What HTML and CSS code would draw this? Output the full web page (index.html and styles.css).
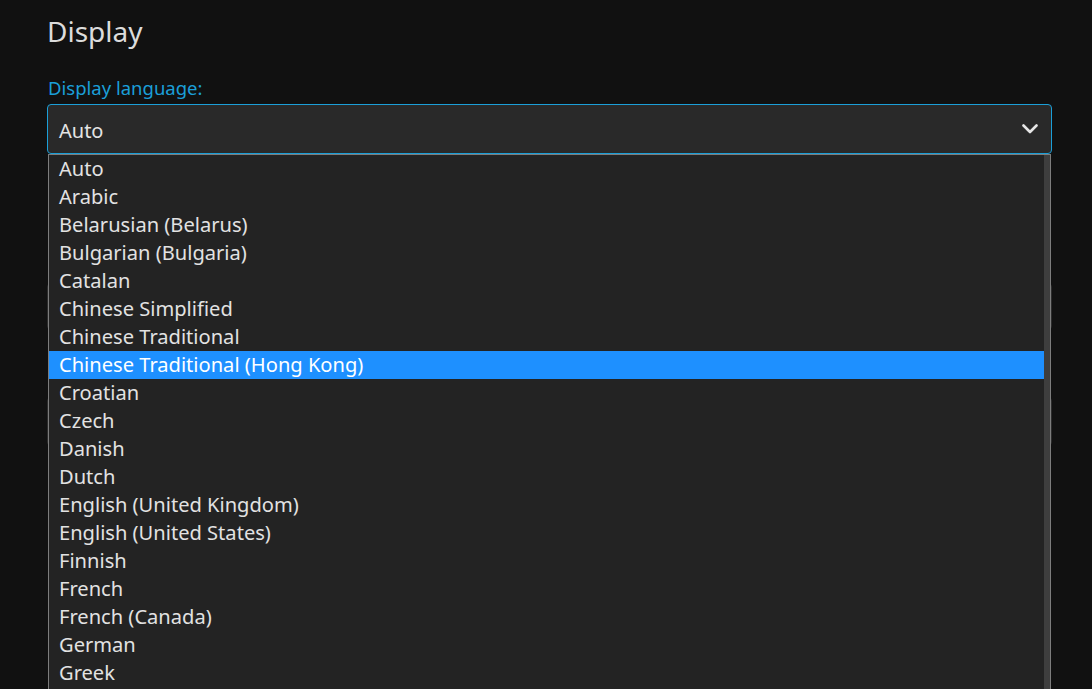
FILE: index.html
```html
<!DOCTYPE html>
<html lang="en">
<head>
<meta charset="utf-8">
<title>Display</title>
<link rel="stylesheet" href="styles.css">
</head>
<body>
<div class="page">
  <h2 class="title">Display</h2>
  <label class="label">Display language:</label>
  <div class="select-wrap">
    <div class="select">
      <span class="select-value">Auto</span>
      <svg class="chevron" width="16" height="10" viewBox="0 0 16 10"><polyline points="1.5,1.5 8,8 14.5,1.5" fill="none" stroke="#e6e6e6" stroke-width="2.6" stroke-linecap="round" stroke-linejoin="round"/></svg>
    </div>
    <div class="dropdown">
      <ul class="options">
        <li>Auto</li>
        <li>Arabic</li>
        <li>Belarusian (Belarus)</li>
        <li>Bulgarian (Bulgaria)</li>
        <li>Catalan</li>
        <li>Chinese Simplified</li>
        <li>Chinese Traditional</li>
        <li class="active">Chinese Traditional (Hong Kong)</li>
        <li>Croatian</li>
        <li>Czech</li>
        <li>Danish</li>
        <li>Dutch</li>
        <li>English (United Kingdom)</li>
        <li>English (United States)</li>
        <li>Finnish</li>
        <li>French</li>
        <li>French (Canada)</li>
        <li>German</li>
        <li>Greek</li>
      </ul>
      <div class="scrollbar"></div>
    </div>
  </div>
  <div class="ghost ghost-1"></div>
  <div class="ghost ghost-2"></div>
</div>
</body>
</html>
```
FILE: styles.css
```css
html, body {
  margin: 0;
  padding: 0;
  background: #111111;
  overflow: hidden;
  height: 100%;
}
body {
  font-family: "Noto Sans", "Open Sans", sans-serif;
  color: #e0e0e0;
}
.page {
  padding: 13px 40px 0 47px;
  display: flex;
  flex-direction: column;
}
.title {
  margin: 0;
  font-size: 28px;
  line-height: 36px;
  font-weight: 400;
  color: #dcdcdc;
}
.label {
  margin-top: 27px;
  font-size: 18.5px;
  line-height: 24px;
  color: #1b9fd8;
  padding-left: 1px;
}
.select-wrap {
  position: relative;
  margin-top: 4px;
}
.select {
  height: 48px;
  border: 1px solid #1b9fd8;
  border-radius: 4px;
  background: #292929;
  display: flex;
  align-items: center;
  justify-content: space-between;
  padding: 0 13px 0 11px;
}
.select-value {
  font-size: 20px;
  color: #e4e4e4;
  position: relative;
  top: 1px;
}
.chevron {
  display: block;
}
.dropdown {
  position: absolute;
  left: 1px;
  top: 50px;
  width: 1001px;
  height: 540px;
  border: 1px solid #7d7d7d;
  border-bottom: none;
  background: #232323;
  display: flex;
}
.options {
  list-style: none;
  margin: 0;
  padding: 0;
  flex: 1;
}
.options li {
  height: 28px;
  line-height: 28px;
  font-size: 20.1px;
  padding-left: 10px;
  color: #e2e2e2;
  white-space: nowrap;
}
.options li.active {
  background: #1e90ff;
  color: #ffffff;
}
.scrollbar {
  width: 6px;
  background: #3e3e3e;
}
.ghost {
  border: 1px solid #2c2c2c;
  border-radius: 4px;
  background: #1a1a1a;
}
.ghost-1 {
  margin-top: 129px;
  height: 45px;
}
.ghost-2 {
  margin-top: 67px;
  height: 47px;
}
```
